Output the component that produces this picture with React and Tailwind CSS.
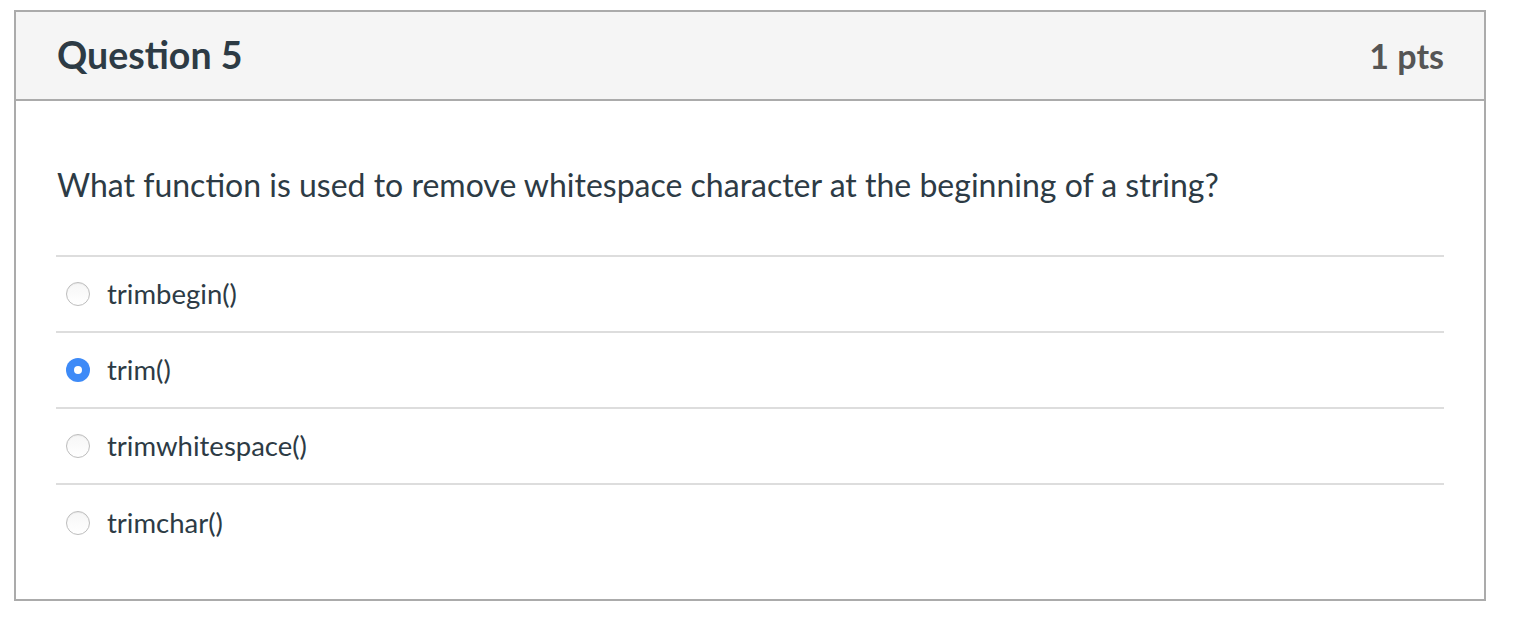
import React from 'react'

const answers = [
  { label: 'trimbegin()', checked: false },
  { label: 'trim()', checked: true },
  { label: 'trimwhitespace()', checked: false },
  { label: 'trimchar()', checked: false },
]

const Radio = ({ checked }) =>
  checked ? (
    <span className="flex h-6 w-6 shrink-0 items-center justify-center rounded-full bg-[#3d8af7]">
      <span className="h-2 w-2 rounded-full bg-white" />
    </span>
  ) : (
    <span className="h-6 w-6 shrink-0 rounded-full border border-[#bdbdbd] bg-gradient-to-b from-[#f6f6f6] to-[#ffffff] shadow-[inset_0_1px_1px_rgba(0,0,0,0.05)]" />
  )

const App = () => {
  return (
    <div className="min-h-[620px] bg-white pl-[14px] pt-[10px] font-['Lato',sans-serif]">
      <div className="w-[1472px] border-2 border-[#ababab]">
        <div className="flex h-[89px] items-center justify-between border-b-2 border-[#ababab] bg-[#f5f5f5] pl-[41px] pr-[40px]">
          <h2 className="text-[37.5px] font-bold text-[#2d3b45]">Question 5</h2>
          <div className="text-[34px] font-bold text-[#555555]">1 pts</div>
        </div>

        <div className="px-[40px] pb-[38px]">
          <p className="pt-[64px] pl-[1px] text-[32px] leading-[40px] text-[#2d3b45]">
            What function is used to remove whitespace character at the beginning of a string?
          </p>

          <div className="mt-[50px] border-t-2 border-[#dddddd]">
            {answers.map((a, i) => (
              <div
                key={a.label}
                className={
                  'flex h-[76px] items-center gap-[17px] pl-[10px] ' +
                  (i < answers.length - 1 ? 'border-b-2 border-[#dddddd]' : '')
                }
              >
                <Radio checked={a.checked} />
                <span className="text-[27.5px] text-[#2d3b45]">{a.label}</span>
              </div>
            ))}
          </div>
        </div>
      </div>
    </div>
  )
}

export default App
